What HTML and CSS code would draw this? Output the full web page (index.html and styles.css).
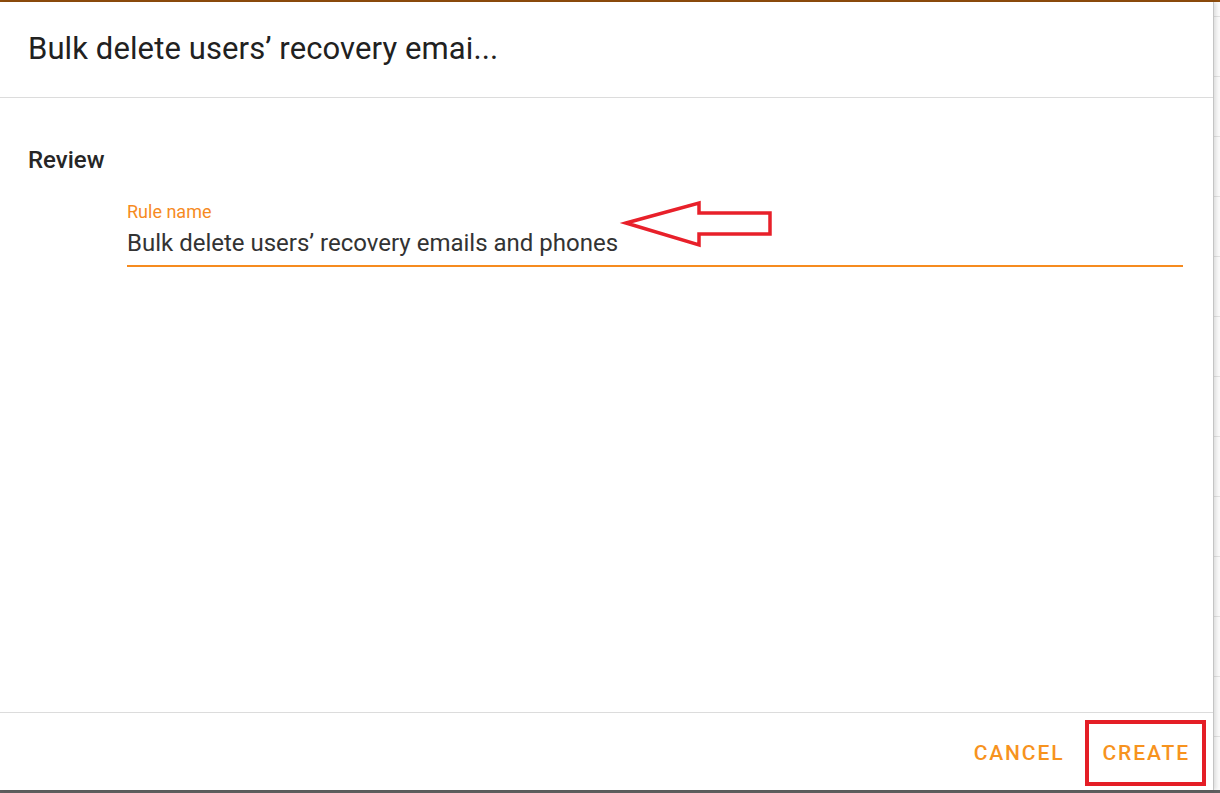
FILE: index.html
```html
<!DOCTYPE html>
<html>
<head>
<meta charset="utf-8">
<link rel="stylesheet" href="styles.css">
</head>
<body>
<div class="topline"></div>
<div class="frame">
  <div class="dialog">
    <div class="header">
      <h1 class="title">Bulk delete users’ recovery emai...</h1>
    </div>
    <div class="content">
      <div class="section">Review</div>
      <div class="field">
        <div class="label">Rule name</div>
        <div class="value">Bulk delete users’ recovery emails and phones</div>
        <svg class="arrow" width="160" height="60" viewBox="0 0 160 60">
          <polygon points="8,27 81,7 81,17 152,17 152,38 81,38 81,49" fill="none" stroke="#e8202a" stroke-width="3.5" stroke-linejoin="miter"/>
        </svg>
      </div>
    </div>
    <div class="footer">
      <button class="btn">CANCEL</button>
      <button class="btn btn-create">CREATE</button>
    </div>
  </div>
  <div class="side">
    <div class="tick"></div><div class="tick"></div><div class="tick"></div><div class="tick"></div><div class="tick"></div><div class="tick"></div><div class="tick"></div><div class="tick"></div><div class="tick"></div><div class="tick"></div><div class="tick"></div><div class="tick"></div><div class="tick"></div>
  </div>
</div>
<div class="bottomline"></div>
</body>
</html>
```

FILE: styles.css
```css
html, body {
  margin: 0;
  padding: 0;
  background: #fff;
  font-family: Roboto, "Liberation Sans", Arial, sans-serif;
  overflow: hidden;
}
body {
  width: 1220px;
  height: 793px;
  display: flex;
  flex-direction: column;
}
.topline {
  height: 2px;
  background: #8f4d0c;
  flex: none;
}
.frame {
  flex: 1;
  display: flex;
  min-height: 0;
}
.dialog {
  width: 1213px;
  display: flex;
  flex-direction: column;
  border-right: 1px solid #c4c4c4;
  box-shadow: 2px 0 4px rgba(0,0,0,0.12);
  position: relative;
  z-index: 1;
  background: #fff;
}
.header {
  height: 95px;
  flex: none;
  border-bottom: 1px solid #dcdcdc;
  display: flex;
  align-items: center;
  padding-left: 28px;
}
.title {
  margin: 0;
  font-size: 31px;
  font-weight: 400;
  color: #212121;
  letter-spacing: 0.1px;
  line-height: 36px;
  position: relative;
  top: -1px;
}
.content {
  flex: 1;
  padding: 48px 30px 0 28px;
}
.section {
  font-size: 24px;
  font-weight: 500;
  line-height: 28px;
  color: #262626;
}
.field {
  margin: 27px 0 0 99px;
  border-bottom: 2px solid #f68b1f;
  padding-bottom: 8px;
  position: relative;
}
.label {
  font-size: 18px;
  color: #f68b1f;
  line-height: 21px;
}
.value {
  font-size: 24px;
  color: #333;
  margin-top: 7px;
  line-height: 28px;
}
.arrow {
  position: absolute;
  left: 491px;
  top: -5px;
}
.footer {
  height: 77px;
  flex: none;
  border-top: 1px solid #dcdcdc;
  display: flex;
  justify-content: flex-end;
  align-items: center;
  padding-right: 25px;
  gap: 16px;
}
.btn {
  background: none;
  border: none;
  font-family: Roboto, "Liberation Sans", Arial, sans-serif;
  font-size: 21px;
  font-weight: 500;
  letter-spacing: 1.9px;
  color: #f7931e;
  padding: 0 8px;
  position: relative;
  top: 1px;
}
.btn-create {
  outline: 4px solid #e41e26;
  outline-offset: 0;
  height: 58px;
  padding: 0 12px 0 14px;
  margin-right: -14px;
}
.side {
  flex: 1;
  background: #fafafa;
  display: flex;
  flex-direction: column;
  gap: 59px;
  padding-top: 14px;
}
.tick {
  height: 1px;
  background: #e2e2e2;
}
.bottomline {
  height: 3px;
  background: #5f5f5f;
  flex: none;
}
```
